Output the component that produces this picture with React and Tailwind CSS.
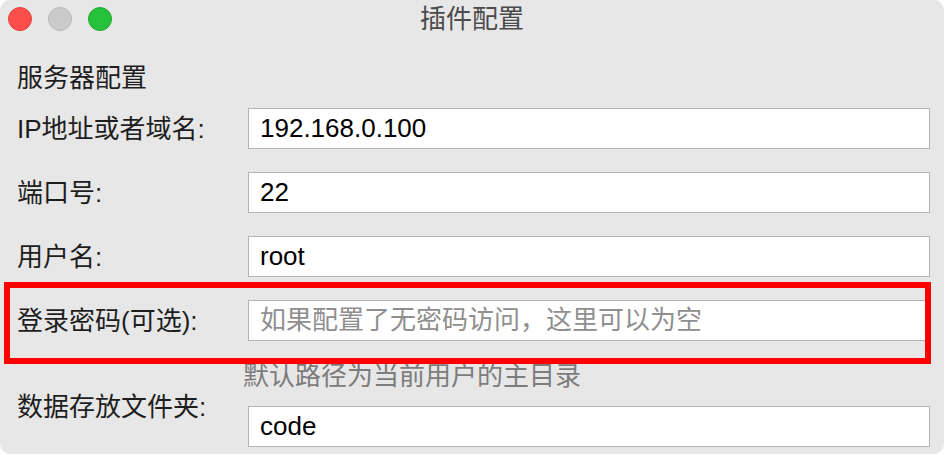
import React from 'react';

const FONT = { fontFamily: '"Liberation Sans", "Noto Sans CJK SC", sans-serif' };

function Field({ label, value, placeholder }) {
  return (
    <div className="flex items-center h-[41px]">
      <div className="w-[231px] shrink-0 text-[26px] text-[#1e1e1e] leading-none">{label}</div>
      <input
        readOnly
        defaultValue={value}
        placeholder={placeholder}
        className="flex-1 h-[41px] bg-white border border-[#b4b4b4] pl-[11px] text-[26px] text-black outline-none placeholder:text-[#8f8f8f]"
        style={FONT}
      />
    </div>
  );
}

export default function App() {
  return (
    <div className="w-[948px] h-[458px] bg-white" style={FONT}>
      <div className="relative w-[944px] h-[454px] bg-[#e7e7e7] rounded-[10px] overflow-hidden">
        {/* Title bar */}
        <div className="relative h-[40px] flex items-center">
          <div className="flex items-center gap-4 pl-2 -mt-[3px]">
            <span className="w-6 h-6 rounded-full bg-[#fc4f4b] border border-[#e0413d]" />
            <span className="w-6 h-6 rounded-full bg-[#cbcbcb] border border-[#b8b8b8]" />
            <span className="w-6 h-6 rounded-full bg-[#27c23c] border border-[#1ea831]" />
          </div>
          <div className="absolute inset-x-0 top-0 h-[37px] flex items-center justify-center text-[26px] text-[#4b4b4b] leading-none">
            插件配置
          </div>
        </div>

        <div className="px-[17px] pr-[14px]">
          <div className="mt-[17px] h-[41px] flex items-center text-[26px] text-[#1e1e1e] leading-none">服务器配置</div>

          <div className="mt-[10px] flex flex-col gap-[23px]">
            <Field label="IP地址或者域名:" value="192.168.0.100" />
            <Field label="端口号:" value="22" />
            <Field label="用户名:" value="root" />
            <Field label="登录密码(可选):" value="" placeholder="如果配置了无密码访问，这里可以为空" />
          </div>

          <div className="mt-[22px] ml-[226px] h-[26px] flex items-center text-[26px] text-[#7c7c7c] leading-none">
            默认路径为当前用户的主目录
          </div>

          <div className="mt-[2px] flex items-start">
            <div className="w-[231px] shrink-0 h-[32px] flex items-center text-[26px] text-[#1e1e1e] leading-none">数据存放文件夹:</div>
            <input
              readOnly
              defaultValue="code"
              className="flex-1 mt-[15px] h-[41px] bg-white border border-[#b4b4b4] pl-[11px] text-[26px] text-black outline-none"
              style={FONT}
            />
          </div>
        </div>

        {/* highlight annotation */}
        <div className="absolute left-[4px] top-[282px] w-[927px] h-[82px] border-[6px] border-[#ff0000] pointer-events-none" />
      </div>
    </div>
  );
}
